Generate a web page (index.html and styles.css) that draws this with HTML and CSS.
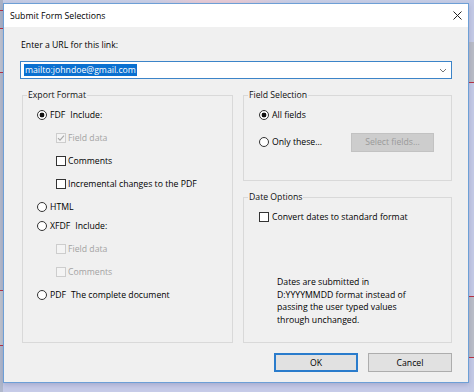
FILE: index.html
```html
<!DOCTYPE html>
<html>
<head>
<meta charset="utf-8">
<title>Submit Form Selections</title>
<link rel="stylesheet" href="styles.css">
</head>
<body>
<div class="screen">
  <div class="dialog">
    <div class="titlebar">
      <span class="title">Submit Form Selections</span>
      <svg class="close" width="9" height="9" viewBox="0 0 9 9"><path d="M0.5 0.5L8.5 8.5M8.5 0.5L0.5 8.5" stroke="#222" stroke-width="1" fill="none"/></svg>
    </div>
    <div class="content">
      <div class="url-label">Enter a URL for this link:</div>
      <div class="combo">
        <span class="sel">mailto:johndoe@gmail.com</span>
        <svg class="chev" width="8" height="5" viewBox="0 0 8 5"><path d="M1 1L4 4L7 1" stroke="#777" stroke-width="1" fill="none"/></svg>
      </div>
      <div class="groups">
        <fieldset class="group export">
          <legend>Export Format</legend>
          <div class="opts">
            <div class="row"><span class="radio on"></span><span>FDF</span><span class="sp">Include:</span></div>
            <div class="row sub dis"><span class="check dis"><svg width="8" height="8" viewBox="0 0 8 8"><path d="M1 4.2L3 6.2L7 1.6" stroke="#a9a9a9" stroke-width="1.1" fill="none"/></svg></span><span>Field data</span></div>
            <div class="row sub"><span class="check"></span><span>Comments</span></div>
            <div class="row sub"><span class="check"></span><span>Incremental changes to the PDF</span></div>
            <div class="row"><span class="radio"></span><span>HTML</span></div>
            <div class="row tight"><span class="radio"></span><span>XFDF</span><span class="sp">Include:</span></div>
            <div class="row sub dis"><span class="check dis"></span><span>Field data</span></div>
            <div class="row sub dis"><span class="check dis"></span><span>Comments</span></div>
            <div class="row"><span class="radio"></span><span>PDF</span><span class="sp">The complete document</span></div>
          </div>
        </fieldset>
        <div class="right">
          <fieldset class="group fields">
            <legend>Field Selection</legend>
            <div class="opts">
              <div class="row"><span class="radio on"></span><span>All fields</span></div>
              <div class="row"><span class="radio"></span><span>Only these...</span><button class="btn disabled" type="button">Select fields...</button></div>
            </div>
          </fieldset>
          <fieldset class="group dates">
            <legend>Date Options</legend>
            <div class="opts">
              <div class="row"><span class="check wide"></span><span>Convert dates to standard format</span></div>
              <p class="note">Dates are submitted in<br>D:YYYYMMDD format instead of<br>passing the user typed values<br>through unchanged.</p>
            </div>
          </fieldset>
        </div>
      </div>
      <div class="buttons">
        <button class="btn default" type="button">OK</button>
        <button class="btn" type="button">Cancel</button>
      </div>
    </div>
  </div>
</div>
</body>
</html>
```

FILE: styles.css
```css
* { box-sizing: border-box; }
html, body { margin: 0; padding: 0; }
body {
  font-family: "Open Sans", "Noto Sans", sans-serif;
  font-size: 8.7px;
  color: #000;
}
.screen {
  width: 474px;
  height: 392px;
  overflow: hidden;
  padding: 3px 0 0 3px;
  background:
    linear-gradient(to bottom, #aab2c6 0 10px, #b83040 10px 11px, #aab2c6 11px 28px, #b83040 28px 29px, #c0c4d0 29px 72px, #b83040 72px 73px, #b4bacb 73px 290px, #b83040 290px 291px, #c0c4ce 291px 345px, #b83040 345px 346px, #b0b8cc 346px) left top / 3px 100% no-repeat,
    linear-gradient(to bottom, #c4cae6 0 42px, #b9bcc6 42px 82px, #b83040 82px 83px, #c4cae6 83px 296px, #b83040 296px 297px, #bbbec8 297px 357px, #b83040 357px 358px, #c4cae6 358px) right top / 5px 100% no-repeat,
    linear-gradient(to right, #c5cde6 0, #c8cfe6 150px, #e6cbd6 200px, #e6cbd6 240px, #c8cfe6 290px, #c5cde6 100%) left top / 100% 3px no-repeat,
    #c6cbe8;
}
.dialog {
  width: 466px;
  height: 380px;
  border: 1px solid #6d9fd6;
  background: #f0f0f0;
  display: flex;
  flex-direction: column;
  box-shadow: 0 2px 5px rgba(70, 80, 130, 0.25);
}
.titlebar {
  flex: none;
  height: 23px;
  background: #fff;
  display: flex;
  align-items: center;
  justify-content: space-between;
  padding: 0 6px 0 6px;
}
.title { line-height: 12px; }
.close { display: block; margin-top: -1px; }
.content {
  flex: 1;
  display: flex;
  flex-direction: column;
  padding: 0 16px;
}
.url-label {
  margin-top: 12px;
  line-height: 12px;
  padding-left: 1px;
}
.combo {
  margin-top: 10px;
  height: 18px;
  border: 1px solid #3c84c8;
  background: #fff;
  display: flex;
  align-items: center;
  justify-content: space-between;
  padding: 0 4px 0 3px;
}
.sel {
  background: #0a70d0;
  color: #fff;
  line-height: 12px;
  padding: 0 1px;
}
.chev { display: block; }
.groups {
  margin-top: 10px;
  height: 254px;
  display: flex;
  gap: 10px;
  padding-left: 2px;
}
.group {
  margin: 0;
  padding: 0;
  min-width: 0;
  border: 1px solid #d9d9d9;
}
.group legend {
  padding: 0 1px;
  margin-left: 4px;
  line-height: 12px;
  font-size: inherit;
  color: #111;
}
.export { flex: 0 0 211px; }
.right {
  flex: 0 0 209px;
  display: flex;
  flex-direction: column;
  gap: 10px;
}
.fields { height: 92px; }
.dates { height: 152px; }
.opts {
  display: flex;
  flex-direction: column;
}
.export .opts { padding: 4px 0 0 14px; gap: 3px; }
.fields .opts { padding: 4px 17px 0 15px; gap: 7px; }
.dates .opts { padding: 4px 0 0 15px; }
.row {
  height: 20px;
  display: flex;
  align-items: center;
  white-space: nowrap;
}
.row.sub { margin-left: 19px; }
.row.tight { margin-top: -4px; }
.row.dis { color: #a3a3a3; }
.sp { margin-left: 5px; }
.radio {
  flex: none;
  width: 10px;
  height: 10px;
  border-radius: 50%;
  border: 1px solid #333;
  background: #fff;
  margin-right: 3px;
}
.radio.on {
  background: radial-gradient(circle at center, #111 0 2.1px, #fff 2.7px);
}
.check {
  flex: none;
  width: 10px;
  height: 10px;
  border: 1px solid #333;
  background: #fff;
  margin-right: 2px;
  display: flex;
  align-items: center;
  justify-content: center;
}
.check.wide { margin-right: 3px; }
.check.dis {
  border-color: #cdcdcd;
  background: #f4f4f4;
}
.check svg { display: block; }
.note {
  margin: 49px 0 0 18px;
  line-height: 12.5px;
}
.btn {
  font-family: inherit;
  font-size: inherit;
  color: #000;
  width: 84px;
  height: 19px;
  padding: 0;
  background: #e1e1e1;
  border: 1px solid #adadad;
  line-height: 16px;
}
.btn.disabled {
  width: 83px;
  margin-left: auto;
  background: #cdcdcd;
  border-color: #c2c2c2;
  color: #9a9a9a;
}
.btn.default {
  border-color: #2a7ccc;
  box-shadow: inset 0 0 0 1px #2a7ccc;
}
.buttons {
  margin-top: 10px;
  display: flex;
  justify-content: flex-end;
  gap: 10px;
}
```
